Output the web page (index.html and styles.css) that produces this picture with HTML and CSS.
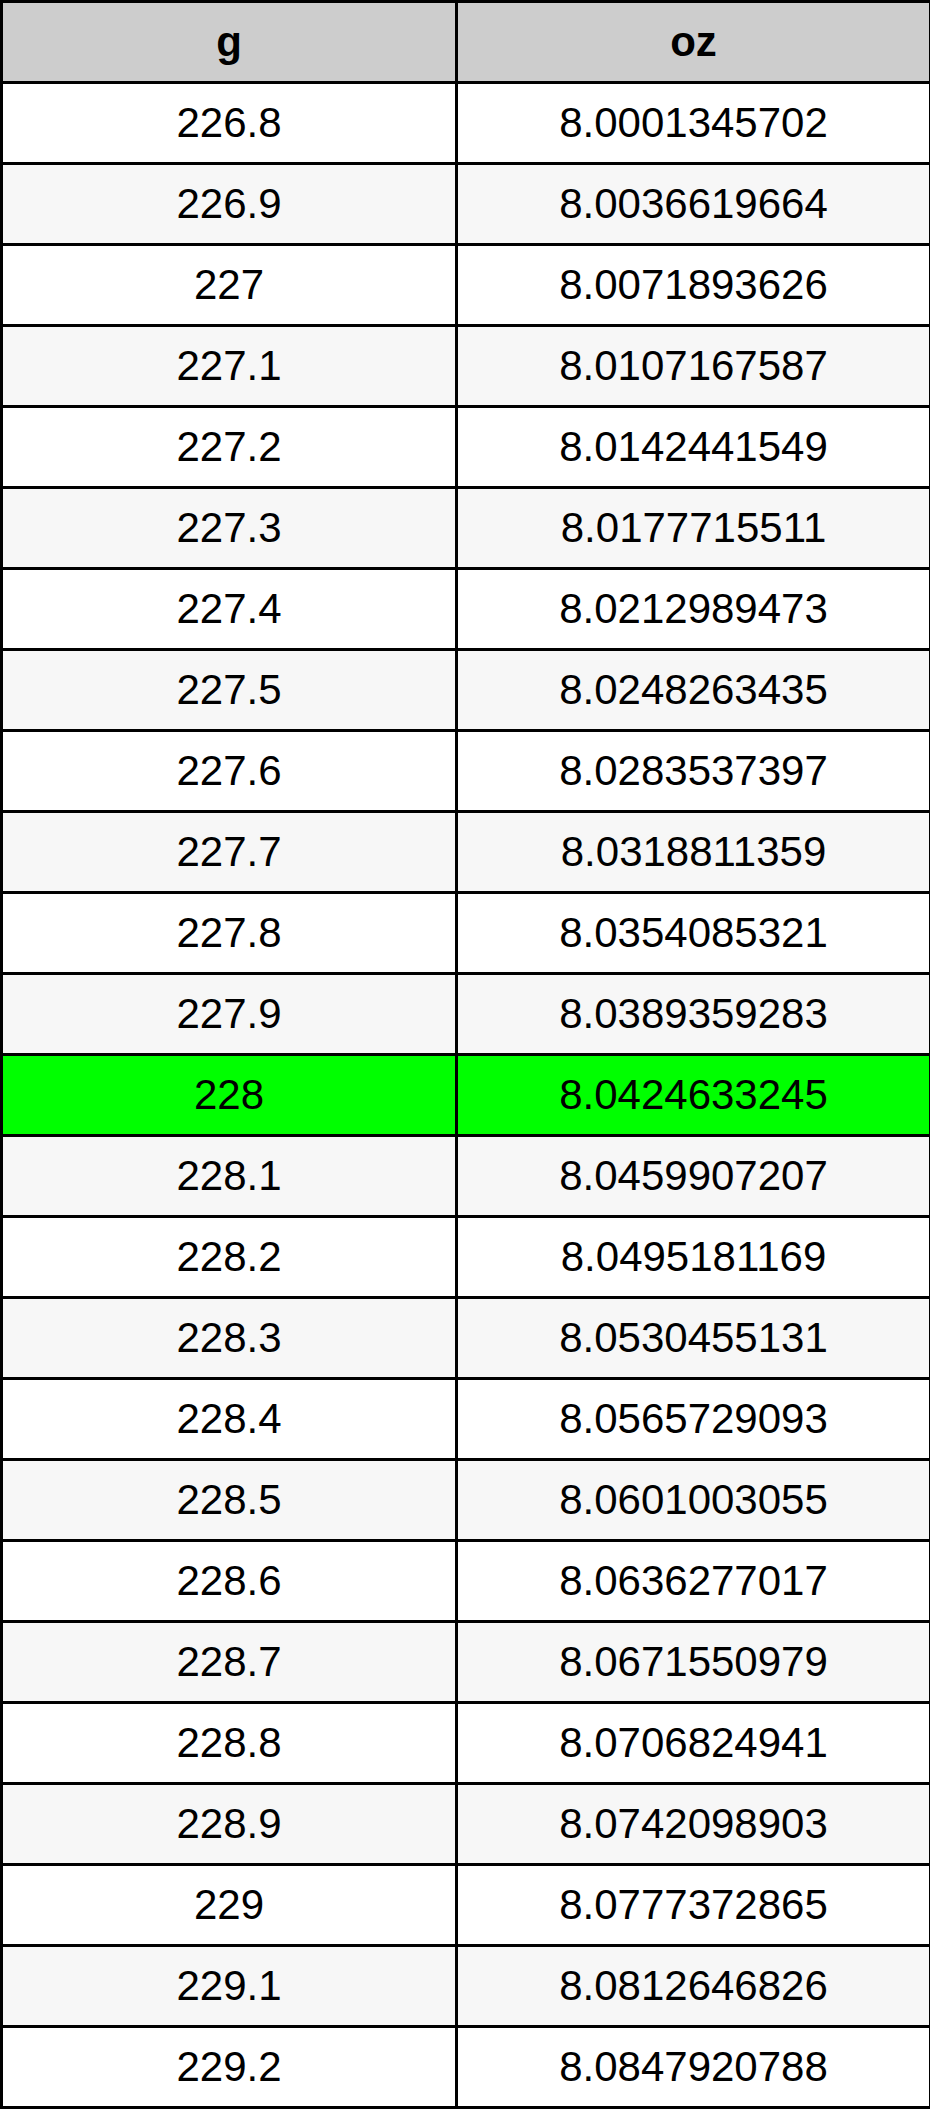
FILE: index.html
```html
<!DOCTYPE html>
<html>
<head>
<meta charset="utf-8">
<link rel="stylesheet" href="styles.css">
</head>
<body>
<table class="conv">
<colgroup><col class="c1"><col class="c2"></colgroup>
<thead>
<tr><th>g</th><th>oz</th></tr>
</thead>
<tbody>
<tr><td>226.8</td><td>8.0001345702</td></tr>
<tr><td>226.9</td><td>8.0036619664</td></tr>
<tr><td>227</td><td>8.0071893626</td></tr>
<tr><td>227.1</td><td>8.0107167587</td></tr>
<tr><td>227.2</td><td>8.0142441549</td></tr>
<tr><td>227.3</td><td>8.0177715511</td></tr>
<tr><td>227.4</td><td>8.0212989473</td></tr>
<tr><td>227.5</td><td>8.0248263435</td></tr>
<tr><td>227.6</td><td>8.0283537397</td></tr>
<tr><td>227.7</td><td>8.0318811359</td></tr>
<tr><td>227.8</td><td>8.0354085321</td></tr>
<tr><td>227.9</td><td>8.0389359283</td></tr>
<tr class="hl"><td>228</td><td>8.0424633245</td></tr>
<tr><td>228.1</td><td>8.0459907207</td></tr>
<tr><td>228.2</td><td>8.0495181169</td></tr>
<tr><td>228.3</td><td>8.0530455131</td></tr>
<tr><td>228.4</td><td>8.0565729093</td></tr>
<tr><td>228.5</td><td>8.0601003055</td></tr>
<tr><td>228.6</td><td>8.0636277017</td></tr>
<tr><td>228.7</td><td>8.0671550979</td></tr>
<tr><td>228.8</td><td>8.0706824941</td></tr>
<tr><td>228.9</td><td>8.0742098903</td></tr>
<tr><td>229</td><td>8.0777372865</td></tr>
<tr><td>229.1</td><td>8.0812646826</td></tr>
<tr><td>229.2</td><td>8.0847920788</td></tr>
</tbody>
</table>
</body>
</html>
```
FILE: styles.css
```css
html, body {
  margin: 0;
  padding: 0;
  background: #ffffff;
}
.conv {
  border-collapse: collapse;
  table-layout: fixed;
  width: 929px;
  font-family: "Liberation Sans", Arial, sans-serif;
  font-size: 42px;
  color: #000;
}
.conv .c1 { width: 455px; }
.conv .c2 { width: 474px; }
.conv th, .conv td {
  border: 3px solid #000;
  height: 78px;
  padding: 0;
  text-align: center;
  vertical-align: middle;
  line-height: 1;
}
.conv th {
  background: #cdcdcd;
  font-weight: bold;
}
.conv tbody tr:nth-child(odd) td { background: #ffffff; }
.conv tbody tr:nth-child(even) td { background: #f7f7f7; }
.conv tbody tr.hl td { background: #00ff00; }
```
